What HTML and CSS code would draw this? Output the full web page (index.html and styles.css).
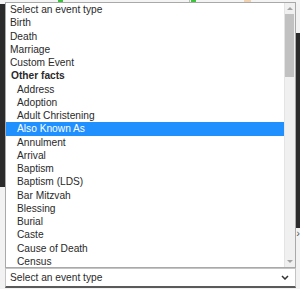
FILE: index.html
```html
<html>

<head>
  <meta charset="utf-8">
  <link rel="stylesheet" href="styles.css">
</head>

<body>
  <div class="topbar">
    <span class="mark mark-green" style="margin-left: 58px"></span>
    <span class="mark mark-gray" style="margin-left: 126px"></span>
    <span class="mark mark-green" style="margin-left: 1px"></span>
    <span class="mark mark-orange" style="margin-left: 48px"></span>
  </div>
  <div class="backdrop">
    <div class="pane pane-left"></div>
    <div class="pane pane-right"></div>
  </div>
  <div class="hint"><span class="hint-glyph">›</span></div>

  <div class="event-select">
    <div class="event-select-text">Select an event type</div>
    <svg class="chevron" width="8" height="5" viewBox="0 0 8 5">
      <polyline points="1,1 4,4 7,1" fill="none" stroke="#333" stroke-width="1.5"/>
    </svg>
  </div>

  <!-- open dropdown, drawn over the page -->
  <div class="dropdown">
    <div class="options">
      <div class="option">Select an event type</div>
      <div class="option">Birth</div>
      <div class="option">Death</div>
      <div class="option">Marriage</div>
      <div class="option">Custom Event</div>
      <div class="optgroup">Other facts</div>
      <div class="option option-nested">Address</div>
      <div class="option option-nested">Adoption</div>
      <div class="option option-nested">Adult Christening</div>
      <div class="option option-nested selected">Also Known As</div>
      <div class="option option-nested">Annulment</div>
      <div class="option option-nested">Arrival</div>
      <div class="option option-nested">Baptism</div>
      <div class="option option-nested">Baptism (LDS)</div>
      <div class="option option-nested">Bar Mitzvah</div>
      <div class="option option-nested">Blessing</div>
      <div class="option option-nested">Burial</div>
      <div class="option option-nested">Caste</div>
      <div class="option option-nested">Cause of Death</div>
      <div class="option option-nested">Census</div>
    </div>
    <div class="scrollbar">
      <div class="scroll-arrow">
        <svg width="6" height="4" viewBox="0 0 6 4"><polygon points="0,4 3,1 6,4" fill="#a3a3a3"/></svg>
      </div>
      <div class="scroll-thumb"></div>
      <div class="scroll-space"></div>
      <div class="scroll-arrow">
        <svg width="6" height="4" viewBox="0 0 6 4"><polygon points="0,0 3,3 6,0" fill="#a3a3a3"/></svg>
      </div>
    </div>
  </div>
</body>

</html>
```

FILE: styles.css
```css
html,
body {
  margin: 0;
  padding: 0;
}

body {
  position: relative;
  width: 300px;
  height: 289px;
  overflow: hidden;
  display: flex;
  flex-direction: column;
  background: #f2f2f2;
  font-family: "Liberation Sans", Arial, sans-serif;
  font-size: 10.2px;
  color: #2a2a2a;
}

/* page behind the dropdown */
.topbar {
  height: 4px;
  display: flex;
  align-items: flex-start;
  background: #f4f4f4;
}

.mark {
  display: block;
  width: 5px;
  height: 2px;
}

.mark-green { background: #3cc43c; }
.mark-gray { background: #bbb; width: 1px; }
.mark-orange { background: #f1d2b0; width: 7px; }

.backdrop {
  display: flex;
  height: 224px;
}

.pane {
  background: #2b2b2b;
}

.pane-left {
  width: 150px;
  height: 183px;
}

.pane-right {
  flex: 1;
  margin-top: 29px;
  height: 195px;
}

.hint {
  display: flex;
  justify-content: flex-end;
  height: 12px;
}

.hint-glyph {
  font-size: 11px;
  line-height: 10px;
  color: #555;
}

/* closed select at the bottom */
.event-select {
  margin-top: auto;
  margin-left: 5px;
  margin-bottom: 1px;
  width: 291px;
  height: 20px;
  box-sizing: border-box;
  display: flex;
  align-items: center;
  padding: 0 6px 0 4px;
  background: #fff;
  border: 1px solid #c4c4c4;
  border-bottom: 2px solid #5a5a5a;
}

.event-select-text {
  flex: 1;
}

/* open list */
.dropdown {
  position: absolute;
  top: 2px;
  left: 5px;
  width: 291px;
  height: 266px;
  box-sizing: border-box;
  display: flex;
  background: #fff;
  border: 1px solid #a9a9a9;
}

.options {
  flex: 1;
  overflow: hidden;
}

.option,
.optgroup {
  height: 13.25px;
  line-height: 13.25px;
  padding-left: 4px;
  white-space: nowrap;
}

.optgroup {
  padding-left: 5px;
  font-weight: bold;
}

.option-nested {
  padding-left: 11px;
}

.option.selected {
  background: #2090ff;
  color: #fff;
}

.scrollbar {
  width: 10px;
  display: flex;
  flex-direction: column;
  background: #f0f0f0;
  border-left: 1px solid #e4e4e4;
}

.scroll-arrow {
  height: 10px;
  display: flex;
  align-items: center;
  justify-content: center;
}

.scroll-thumb {
  height: 63px;
  margin: 1px 1px 0 0;
  background: #c1c1c1;
}

.scroll-space {
  flex: 1;
}
```
